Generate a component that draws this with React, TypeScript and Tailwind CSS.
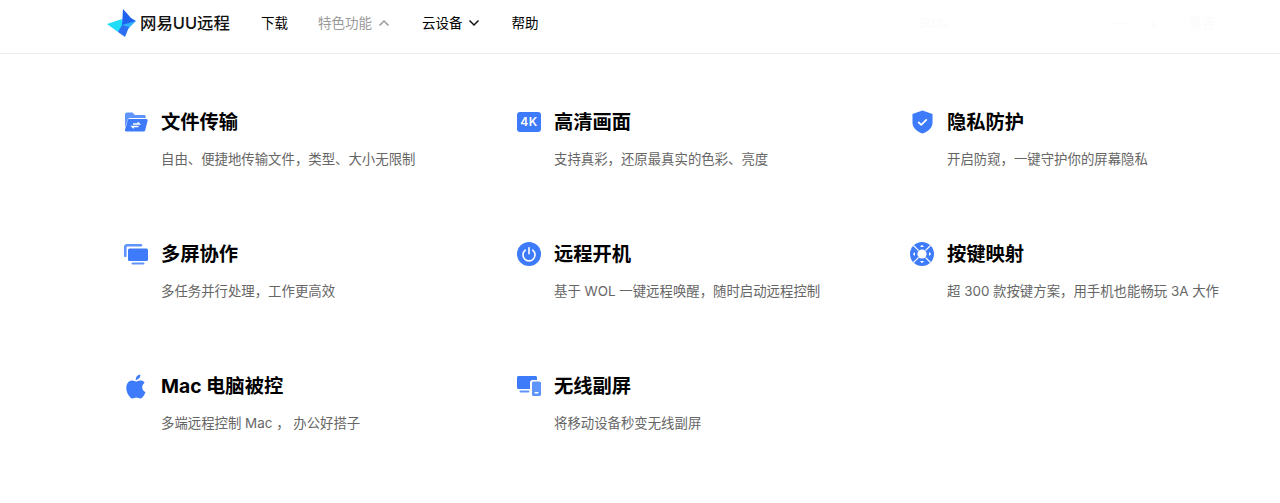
import type { ReactNode } from 'react'

const BLUE = '#3e7bfa'

function FolderIcon() {
  return (
    <svg width="24" height="22" viewBox="0 0 24 22" aria-hidden>
      <path d="M1 3.500C1 2.400 1.900 1.500 3 1.500h5.500l2.400 2.600H20c1 0 1.700.7 1.700 1.700V7H6.200C4.900 7 4 7.700 3.600 8.900L1 16.500z" fill="#5f95fb" />
      <path d="M5.300 8h17c.9 0 1.500.8 1.300 1.700l-2.400 9.500c-.2.800-.9 1.300-1.700 1.300H2.300c-.9 0-1.500-.8-1.300-1.700L3.700 9.200C3.900 8.500 4.500 8 5.300 8z" fill={BLUE} />
      <path d="M9 13h6.500l-1.800-1.700M14.500 15.500H8l1.800 1.700" stroke="#fff" strokeWidth="1.300" fill="none" />
    </svg>
  )
}

function FourKIcon() {
  return (
    <div className="flex h-[20px] w-6 items-center justify-center rounded-[3px] bg-[#3e7bfa] text-[12px] font-semibold tracking-[0.5px] text-white">
      4K
    </div>
  )
}

function ShieldIcon() {
  return (
    <svg className="ml-[2px]" width="21" height="24" viewBox="0 0 22 25" aria-hidden>
      <path d="M11 0.500 21.500 4v9c0 5.500-4.500 9.500-10.500 11.500C5 22.500.5 18.500.5 13V4z" fill={BLUE} />
      <path d="M6.500 12.500l3.200 3 5.800-5.800" stroke="#fff" strokeWidth="1.800" fill="none" />
    </svg>
  )
}

function ScreensIcon() {
  return (
    <svg width="24" height="21" viewBox="0 0 24 21" aria-hidden>
      <path d="M1.300 12V3.300c0-1.100.9-2 2-2H17" stroke="#5f95fb" strokeWidth="2.600" fill="none" strokeLinecap="round" />
      <rect x="4" y="4.500" width="20" height="12.500" rx="1.500" fill={BLUE} />
      <rect x="7.500" y="18.500" width="13" height="2" rx="1" fill="#5f95fb" />
    </svg>
  )
}

function PowerIcon() {
  return (
    <svg width="24" height="24" viewBox="0 0 24 24" aria-hidden>
      <circle cx="12" cy="12" r="12" fill={BLUE} />
      <path d="M8.300 8.200a6 6 0 1 0 7.400 0" stroke="#fff" strokeWidth="1.600" fill="none" strokeLinecap="round" />
      <path d="M12 5.800v6" stroke="#fff" strokeWidth="1.600" strokeLinecap="round" />
    </svg>
  )
}

function PadIcon() {
  return (
    <svg width="24" height="24" viewBox="0 0 24 24" aria-hidden>
      <circle cx="12" cy="12" r="12" fill={BLUE} />
      <circle cx="12" cy="12" r="4.600" fill="#fff" />
      <path d="M3.500 3.500l5 5M20.500 3.500l-5 5M3.500 20.500l5-5M20.500 20.500l-5-5" stroke="#fff" strokeWidth="1.100" />
      <path d="M12 2.800l2 2.200h-4zM12 21.200l2-2.200h-4zM2.800 12l2.200-2v4zM21.200 12l-2.200-2v4z" fill="#fff" />
    </svg>
  )
}

function AppleIcon() {
  return (
    <svg className="ml-[2px]" width="20" height="25" viewBox="3 1 17.500 22" aria-hidden>
      <path
        d="M17.200 12.700c0-2.600 2.100-3.800 2.200-3.900-1.200-1.800-3.100-2-3.700-2-1.600-.2-3.100.9-3.900.9s-2.100-.9-3.400-.9c-1.700 0-3.400 1-4.300 2.600-1.900 3.200-.5 7.900 1.300 10.500.9 1.300 1.900 2.700 3.300 2.600 1.300-.1 1.800-.8 3.400-.8s2 .8 3.400.8 2.300-1.300 3.200-2.600c1-1.500 1.400-2.900 1.400-3-.1 0-2.900-1.100-2.900-4.200z"
        fill={BLUE}
      />
      <path d="M14.500 4.800c.7-.9 1.200-2.100 1.100-3.300-1 0-2.300.7-3 1.500-.7.800-1.200 2-1.100 3.200 1.200.1 2.300-.6 3-1.400z" fill={BLUE} />
    </svg>
  )
}

function DevicesIcon() {
  return (
    <svg width="24" height="20" viewBox="0 0 24 20" aria-hidden>
      <path d="M1.500 0h17c.8 0 1.500.7 1.500 1.500V4h-4.500C14.100 4 13 5.100 13 6.500V13H1.500C.7 13 0 12.300 0 11.500v-10C0 .7.700 0 1.500 0z" fill={BLUE} />
      <rect x="2.500" y="14.500" width="10" height="2" rx="1" fill="#5f95fb" />
      <rect x="15" y="5.500" width="9" height="14.500" rx="1.500" fill="#5f95fb" />
      <rect x="17.500" y="16" width="4" height="1.400" rx=".7" fill="#fff" />
    </svg>
  )
}

function Logo() {
  return (
    <svg width="30" height="29" viewBox="0 0 30 29" aria-hidden>
      <path d="M0 15 L15 10 L15 21 L11 23 Z" fill="#1fdcf9" />
      <path d="M15 13 L29 12 L19 22 L15 21 Z" fill="#2fb4fb" />
      <path d="M16 0 L24 9 L29 12 L15 16 Z" fill="#1e62ee" />
      <path d="M11 23 L15 16 L22 18 L18 28 Z" fill="#2d6ff2" />
    </svg>
  )
}

function Chevron({ up, color }: { up?: boolean; color: string }) {
  return (
    <svg width="12" height="8" viewBox="0 0 12 8" aria-hidden>
      <path d={up ? 'M1.500 6.500 6 2l4.500 4.500' : 'M1.500 1.500 6 6l4.500-4.500'} stroke={color} strokeWidth="1.500" fill="none" />
    </svg>
  )
}

const features: { icon: ReactNode; title: string; desc: string }[] = [
  { icon: <FolderIcon />, title: '文件传输', desc: '自由、便捷地传输文件，类型、大小无限制' },
  { icon: <FourKIcon />, title: '高清画面', desc: '支持真彩，还原最真实的色彩、亮度' },
  { icon: <ShieldIcon />, title: '隐私防护', desc: '开启防窥，一键守护你的屏幕隐私' },
  { icon: <ScreensIcon />, title: '多屏协作', desc: '多任务并行处理，工作更高效' },
  { icon: <PowerIcon />, title: '远程开机', desc: '基于 WOL 一键远程唤醒，随时启动远程控制' },
  { icon: <PadIcon />, title: '按键映射', desc: '超 300 款按键方案，用手机也能畅玩 3A 大作' },
  { icon: <AppleIcon />, title: 'Mac 电脑被控', desc: '多端远程控制 Mac ， 办公好搭子' },
  { icon: <DevicesIcon />, title: '无线副屏', desc: '将移动设备秒变无线副屏' },
]

export default function App() {
  return (
    <div className="h-[503px] w-[1280px] overflow-hidden bg-white font-['Inter','Noto_Sans_CJK_SC',sans-serif] text-black">
      <header className="flex h-[54px] items-center border-b border-[#ececec] pb-[7px] pl-[107px] text-[13.500px]">
        <div className="flex items-center">
          <Logo />
          <span className="ml-[3px] w-[91px] text-[16.400px] font-medium whitespace-nowrap text-[#111]">网易UU远程</span>
        </div>
        <span className="ml-[30px]">下载</span>
        <span className="ml-[30px] flex items-center gap-[6px] text-[#999]">
          特色功能
          <Chevron up color="#999" />
        </span>
        <span className="ml-[32px] flex items-center gap-[5px]">
          云设备
          <Chevron color="#111" />
        </span>
        <span className="ml-[32px]">帮助</span>
        <div className="ml-[380px] flex items-center text-[#fbfbfb]">
          <span className="w-[195px]">90%</span>
          <span className="w-[35px]">—</span>
          <span className="w-[40px]">+</span>
          <span>重置</span>
        </div>
      </header>

      <main className="grid grid-cols-[393px_393px_auto] pl-[124px] pt-[52px]">
        {features.map((f) => (
          <div key={f.title} className="h-[132px]">
            <div className="flex h-[32px] items-center">
              <div className="flex w-[37px] shrink-0 items-center">{f.icon}</div>
              <h3 className="text-[19.300px] leading-[32px] font-bold whitespace-nowrap">{f.title}</h3>
            </div>
            <p className="mt-[11px] pl-[37px] text-[13.400px] leading-[20px] whitespace-nowrap text-[#666]">{f.desc}</p>
          </div>
        ))}
      </main>
    </div>
  )
}
